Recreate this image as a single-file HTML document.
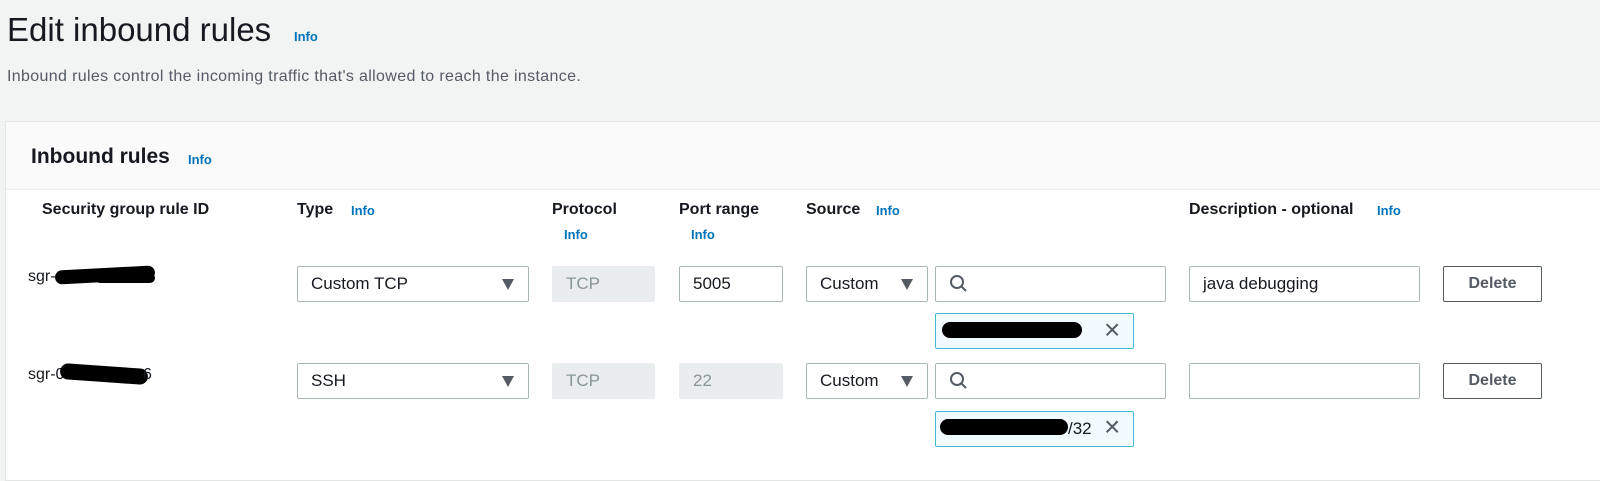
<!DOCTYPE html>
<html><head><style>
*{box-sizing:border-box;margin:0;padding:0}
body{width:1600px;height:474px;overflow:hidden;background:#f2f3f3;font-family:"Liberation Sans",sans-serif;color:#16191f;position:relative}
.a{position:absolute;white-space:nowrap}
.info{color:#0073bb;font-weight:bold;font-size:13px}
.card{position:absolute;left:5px;top:121px;width:1600px;height:360px;background:#fff;border:1px solid #e4e6e6}
.hb{position:absolute;left:6px;top:122px;width:1600px;height:68px;background:#fafafa;border-bottom:1px solid #eaeded}
.h{font-weight:bold;font-size:16px}
.box{position:absolute;border:1px solid #aab7b8;background:#fff;border-radius:2px;font-size:17px;padding-left:13px;display:flex;align-items:center}
.dis{background:#eaeded;border-color:#eaeded;color:#879596}
.arr{position:absolute;right:14px;top:12px;width:0;height:0;border-left:6px solid transparent;border-right:6px solid transparent;border-top:11px solid #545b64}
.del{position:absolute;border:1px solid #545b64;border-radius:2px;background:#fff;font-weight:bold;font-size:16px;color:#545b64;display:flex;align-items:center;justify-content:center}
.tok{position:absolute;background:#f1faff;border:1px solid #44b9d6;border-radius:2px}
.blob{position:absolute;background:#000;border-radius:10px}
</style></head><body>
<div class="a" style="left:7px;top:11px;font-size:33px">Edit inbound rules</div>
<div class="a info" style="left:294px;top:29px">Info</div>
<div class="a" style="left:7px;top:68px;font-size:16px;letter-spacing:0.35px;color:#545b64">Inbound rules control the incoming traffic that's allowed to reach the instance.</div>
<div class="card"></div><div class="hb"></div>
<div class="a" style="left:31px;top:145px;font-size:21px;font-weight:bold">Inbound rules</div>
<div class="a info" style="left:188px;top:152px">Info</div>
<div class="a h" style="left:42px;top:201px">Security group rule ID</div>
<div class="a h" style="left:297px;top:201px">Type</div><div class="a info" style="left:351px;top:203px">Info</div>
<div class="a h" style="left:552px;top:201px">Protocol</div><div class="a info" style="left:564px;top:227px">Info</div>
<div class="a h" style="left:679px;top:201px">Port range</div><div class="a info" style="left:691px;top:227px">Info</div>
<div class="a h" style="left:806px;top:201px">Source</div><div class="a info" style="left:876px;top:203px">Info</div>
<div class="a h" style="left:1189px;top:201px">Description - optional</div><div class="a info" style="left:1377px;top:203px">Info</div>

<div class="a" style="left:28px;top:268px;font-size:16px">sgr-</div>
<div class="blob" style="left:55px;top:268px;width:100px;height:14px;transform:rotate(-3deg)"></div>
<div class="blob" style="left:95px;top:273px;width:60px;height:10px"></div>
<div class="a" style="left:28px;top:366px;font-size:16px">sgr-0</div>
<div class="blob" style="left:60px;top:366px;width:88px;height:16px;transform:rotate(4deg)"></div>
<div class="a" style="left:143px;top:366px;font-size:16px">6</div>

<div class="box" style="left:297px;top:266px;width:232px;height:36px">Custom TCP<div class="arr"></div></div>
<div class="box dis" style="left:552px;top:266px;width:103px;height:36px">TCP</div>
<div class="box" style="left:679px;top:266px;width:104px;height:36px">5005</div>
<div class="box" style="left:806px;top:266px;width:122px;height:36px">Custom<div class="arr"></div></div>
<div class="box" style="left:935px;top:266px;width:231px;height:36px"><svg width="20" height="20" viewBox="0 0 20 20"><circle cx="8" cy="8" r="6" fill="none" stroke="#545b64" stroke-width="2"/><path d="M12.5 12.5L17 17" stroke="#545b64" stroke-width="2"/></svg></div>
<div class="box" style="left:1189px;top:266px;width:231px;height:36px">java debugging</div>
<div class="del" style="left:1443px;top:266px;width:99px;height:36px">Delete</div>
<div class="tok" style="left:935px;top:313px;width:199px;height:36px"></div>
<div class="blob" style="left:942px;top:322px;width:140px;height:16px"></div>
<div class="a" style="left:1104px;top:314px;font-size:28px;color:#545b64">×</div>

<div class="box" style="left:297px;top:363px;width:232px;height:36px">SSH<div class="arr"></div></div>
<div class="box dis" style="left:552px;top:363px;width:103px;height:36px">TCP</div>
<div class="box dis" style="left:679px;top:363px;width:104px;height:36px">22</div>
<div class="box" style="left:806px;top:363px;width:122px;height:36px">Custom<div class="arr"></div></div>
<div class="box" style="left:935px;top:363px;width:231px;height:36px"><svg width="20" height="20" viewBox="0 0 20 20"><circle cx="8" cy="8" r="6" fill="none" stroke="#545b64" stroke-width="2"/><path d="M12.5 12.5L17 17" stroke="#545b64" stroke-width="2"/></svg></div>
<div class="box" style="left:1189px;top:363px;width:231px;height:36px"></div>
<div class="del" style="left:1443px;top:363px;width:99px;height:36px">Delete</div>
<div class="tok" style="left:935px;top:411px;width:199px;height:36px"></div>
<div class="blob" style="left:940px;top:419px;width:128px;height:16px"></div>
<div class="a" style="left:1068px;top:419px;font-size:17px">/32</div>
<div class="a" style="left:1104px;top:411px;font-size:28px;color:#545b64">×</div>
</body></html>
